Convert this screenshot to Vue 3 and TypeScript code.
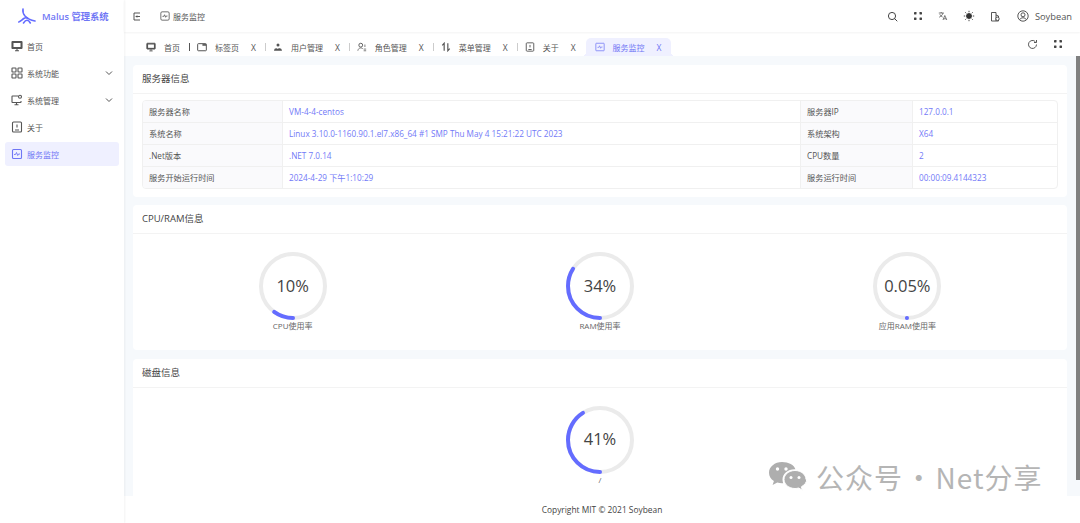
<script setup lang="ts">
const menu = [
  { label: "首页", icon: "monitor", arrow: false },
  { label: "系统功能", icon: "grid", arrow: true },
  { label: "系统管理", icon: "cog", arrow: true },
  { label: "关于", icon: "about", arrow: false },
  { label: "服务监控", icon: "pulse", arrow: false, active: true },
];

const tabs = [
  { label: "首页", icon: "monitor", close: false },
  { label: "标签页", icon: "tab", close: true },
  { label: "用户管理", icon: "users", close: true },
  { label: "角色管理", icon: "role", close: true },
  { label: "菜单管理", icon: "sort", close: true },
  { label: "关于", icon: "about", close: true },
  { label: "服务监控", icon: "pulse", close: true, active: true },
];

const rows = [
  ["服务器名称", "VM-4-4-centos", "服务器IP", "127.0.0.1"],
  ["系统名称", "Linux 3.10.0-1160.90.1.el7.x86_64 #1 SMP Thu May 4 15:21:22 UTC 2023", "系统架构", "X64"],
  [".Net版本", ".NET 7.0.14", "CPU数量", "2"],
  ["服务开始运行时间", "2024-4-29 下午1:10:29", "服务运行时间", "00:00:09.4144323"],
];

const gauges = [
  { label: "CPU使用率", value: 10, text: "10%" },
  { label: "RAM使用率", value: 34, text: "34%" },
  { label: "应用RAM使用率", value: 0.05, text: "0.05%" },
];

const radius = 32;
const circ = 2 * Math.PI * radius;
const dash = (v: number) => `${(circ * v) / 100} ${circ}`;
</script>

<template>
  <div class="layout">
    <aside class="side">
      <div class="logo">
        <svg width="18" height="16" viewBox="0 0 18 16" fill="none" stroke="#646cff" stroke-width="1.600" stroke-linecap="round">
          <path d="M5 1c-.5 3 .3 5 2 7 2 2.200 5 4 10 5" />
          <path d="M.8 14c1.500-.3 3-2 5-3.500 1.500-1 3-1 4 0" />
          <path d="M5.500 15c1-1.500 2-2.800 3.500-2.800s2.500 1.300 3.300 2.800" />
        </svg>
        <span class="logo-text">Malus 管理系统</span>
      </div>
      <nav class="menu">
        <div v-for="m in menu" :key="m.label" class="menu-item" :class="{ active: m.active }">
          <svg class="ic" width="12" height="12" viewBox="0 0 12 12" fill="none" stroke="currentColor" stroke-width="1.100">
            <template v-if="m.icon === 'monitor'">
              <rect x="1" y="1.500" width="10" height="7" rx=".6" fill="currentColor" />
              <rect x="2.500" y="3" width="7" height="4" fill="#fff" stroke="none" />
              <path d="M6 8.500v2M4 10.700h4" />
            </template>
            <template v-else-if="m.icon === 'grid'">
              <rect x="1" y="1" width="4" height="4" rx=".6" />
              <rect x="7" y="1" width="4" height="4" rx=".6" />
              <rect x="1" y="7" width="4" height="4" rx=".6" />
              <rect x="7" y="7" width="4" height="4" rx=".6" />
            </template>
            <template v-else-if="m.icon === 'cog'">
              <path d="M7 2H1.500a.5.5 0 0 0-.5.5v5.500a.5.500 0 0 0 .5.500h8a.5.500 0 0 0 .5-.500V7M5.500 8.500v2M3.500 10.700h4" />
              <circle cx="9" cy="2.800" r="1.500" />
            </template>
            <template v-else-if="m.icon === 'about'">
              <rect x="1.500" y="1" width="9" height="10" rx="1" />
              <path d="M6 3.500v3M4 9h4" />
            </template>
            <template v-else>
              <rect x="1.500" y="1.500" width="9" height="9" rx="1" />
              <path d="M3 6.500h1.500l1-2 1.200 3 .8-1.500H9" stroke-width=".9" />
            </template>
          </svg>
          <span class="menu-label">{{ m.label }}</span>
          <svg v-if="m.arrow" class="arrow" width="8" height="8" viewBox="0 0 8 8" fill="none" stroke="#555" stroke-width="1">
            <path d="M1 2.500l3 3 3-3" />
          </svg>
        </div>
      </nav>
    </aside>

    <div class="main">
      <header class="top">
        <svg class="fold" width="9" height="9" viewBox="0 0 9 9" fill="none" stroke="#444" stroke-width=".9">
          <path d="M2 1v7M2 1h6M2 8h6M4 4.500h4M4 4.500l1-1M4 4.500l1 1" />
        </svg>
        <svg class="crumb-ic" width="10" height="10" viewBox="0 0 12 12" fill="none" stroke="#555" stroke-width="1">
          <rect x="1" y="1" width="10" height="10" rx="1.500" />
          <path d="M3 6.500h1.500l1-2 1.200 3 .8-1.500H9" />
        </svg>
        <span class="crumb">服务监控</span>
        <div class="top-right">
          <svg width="11" height="11" viewBox="0 0 11 11" fill="none" stroke="#444" stroke-width="1">
            <circle cx="5" cy="5" r="3.600" />
            <path d="M7.700 7.700l2.300 2.300" stroke-linecap="round" />
          </svg>
          <svg width="10" height="10" viewBox="0 0 10 10" fill="#444">
            <rect x="1" y="1" width="2.500" height="2.500" rx=".4" />
            <rect x="6.500" y="1" width="2.500" height="2.500" rx=".4" />
            <rect x="1" y="6.500" width="2.500" height="2.500" rx=".4" />
            <rect x="6.500" y="6.500" width="2.500" height="2.500" rx=".4" />
          </svg>
          <svg width="10" height="10" viewBox="0 0 10 10" fill="none" stroke="#555" stroke-width=".8">
            <path d="M.8 2h5M3.200 1v1M5 2c-.4 1.800-1.800 3.300-3.800 4.200M1.800 3.300c.6 1.200 1.600 2.200 2.800 2.700M5 9l1.800-4.500L8.800 9M5.600 7.800h2.500" />
          </svg>
          <svg width="12" height="12" viewBox="0 0 12 12" fill="#333" stroke="#333" stroke-width=".9">
            <circle cx="6" cy="6" r="2.500" />
            <path d="M6 .8v1.400M6 9.800v1.400M.8 6h1.400M9.800 6h1.400M2.300 2.300l1 1M8.700 8.700l1 1M2.300 9.700l1-1M8.700 3.300l1-1" />
          </svg>
          <svg width="11" height="11" viewBox="0 0 11 11" fill="none" stroke="#444" stroke-width=".9">
            <path d="M1.500 10V1.500h4.500V10zM6 4l2.500 1V10H6" />
            <circle cx="7.500" cy="7.800" r="1.700" fill="#fff" />
          </svg>
          <div class="user">
            <svg width="12" height="12" viewBox="0 0 12 12" fill="none" stroke="#444" stroke-width=".9">
              <circle cx="6" cy="6" r="5.200" />
              <circle cx="6" cy="4.800" r="2" />
              <path d="M2.600 9.700c.8-1.300 2-1.900 3.400-1.900s2.600.6 3.400 1.900" />
            </svg>
            <span>Soybean</span>
          </div>
        </div>
      </header>

      <div class="tabbar">
        <div v-for="(t, i) in tabs" :key="t.label" class="tab" :class="{ active: t.active }">
          <svg class="tab-ic" width="10" height="10" viewBox="0 0 12 12" fill="none" stroke="currentColor" stroke-width="1.100">
            <template v-if="t.icon === 'monitor'">
              <rect x="1" y="1.500" width="10" height="7" rx=".6" fill="currentColor" />
              <rect x="2.500" y="3" width="7" height="4" fill="#fff" stroke="none" />
              <path d="M6 8.500v2M4 10.700h4" />
            </template>
            <template v-else-if="t.icon === 'tab'">
              <rect x=".8" y="2" width="10.400" height="8.500" rx=".8" stroke-width="1.200" />
              <path d="M6.500 2.500h4.500V4.500H6.500z" fill="currentColor" stroke="none" />
            </template>
            <template v-else-if="t.icon === 'users'">
              <circle cx="6" cy="3.500" r="1.800" fill="currentColor" stroke="none" />
              <path d="M1.200 10.500c.2-2 1.200-3 2.600-3 1 0 1.600.5 1.900 1 .3-.5 1-1 2.300-1 1.300 0 2.600 1 2.800 3z" fill="currentColor" stroke="none" />
            </template>
            <template v-else-if="t.icon === 'role'">
              <circle cx="4.500" cy="3.800" r="2.300" />
              <path d="M1 10.500c.3-2 1.600-3.400 3.500-3.400 1 0 1.800.3 2.400.9M8 8.500h3M8 10.500h3M9.500 3v3" stroke-width=".9" />
            </template>
            <template v-else-if="t.icon === 'sort'">
              <path d="M3.800 10.500V1.500L1.500 4M8.200 1.500v9l2.300-2.500" stroke-width="1.400" />
            </template>
            <template v-else-if="t.icon === 'about'">
              <rect x="1.500" y="1" width="9" height="10" rx="1" />
              <path d="M6 3.500v3M4 9h4" />
            </template>
            <template v-else>
              <rect x="1" y="1.500" width="10" height="9" rx=".6" stroke-width=".9" />
              <path d="M3 6.500h1.500l1-2 1.200 3 .8-1.500H9" stroke-width=".8" />
            </template>
          </svg>
          <span class="tab-label">{{ t.label }}</span>
          <span v-if="t.close" class="tab-x">X</span>
          <i v-if="i < tabs.length - 2" class="tab-sep" :class="{ dark: i === 0 }"></i>
        </div>
        <div class="tab-tools">
          <svg width="11" height="11" viewBox="0 0 11 11" fill="none" stroke="#444" stroke-width=".9">
            <path d="M9.500 5.500a4 4 0 1 1-1.200-2.900M9.500 1v2.500H7" />
          </svg>
          <svg width="10" height="10" viewBox="0 0 10 10" fill="#444">
            <rect x="1" y="1" width="2.500" height="2.500" rx=".4" />
            <rect x="6.500" y="1" width="2.500" height="2.500" rx=".4" />
            <rect x="1" y="6.500" width="2.500" height="2.500" rx=".4" />
            <rect x="6.500" y="6.500" width="2.500" height="2.500" rx=".4" />
          </svg>
        </div>
      </div>

      <div class="content">
        <section class="card">
          <h3 class="card-title">服务器信息</h3>
          <div class="info-body">
            <table class="info">
              <tr v-for="r in rows" :key="r[0]">
                <th class="c1">{{ r[0] }}</th>
                <td class="c2">{{ r[1] }}</td>
                <th class="c3">{{ r[2] }}</th>
                <td class="c4">{{ r[3] }}</td>
              </tr>
            </table>
          </div>
        </section>

        <section class="card">
          <h3 class="card-title">CPU/RAM信息</h3>
          <div class="gauges">
            <div v-for="g in gauges" :key="g.label" class="gauge">
              <div class="ring">
                <svg width="68" height="68" viewBox="0 0 68 68" fill="none" stroke-width="4">
                  <circle cx="34" cy="34" :r="radius" stroke="#ebebeb" />
                  <circle
                    cx="34"
                    cy="34"
                    :r="radius"
                    stroke="#646cff"
                    stroke-linecap="round"
                    :stroke-dasharray="dash(g.value)"
                    transform="rotate(90 34 34)"
                  />
                </svg>
                <span class="ring-text">{{ g.text }}</span>
              </div>
              <span class="gauge-label">{{ g.label }}</span>
            </div>
          </div>
        </section>

        <section class="card">
          <h3 class="card-title">磁盘信息</h3>
          <div class="gauges">
            <div class="gauge">
              <div class="ring">
                <svg width="68" height="68" viewBox="0 0 68 68" fill="none" stroke-width="4">
                  <circle cx="34" cy="34" :r="radius" stroke="#ebebeb" />
                  <circle
                    cx="34"
                    cy="34"
                    :r="radius"
                    stroke="#646cff"
                    stroke-linecap="round"
                    :stroke-dasharray="dash(41)"
                    transform="rotate(90 34 34)"
                  />
                </svg>
                <span class="ring-text">41%</span>
              </div>
              <span class="gauge-label">/</span>
            </div>
          </div>
        </section>
        <div class="scroll-thumb"></div>
      </div>

      <footer class="foot">Copyright MIT © 2021 Soybean</footer>
    </div>

    <div class="watermark">
      <svg width="39" height="33" viewBox="0 0 39 33" fill="#aeaeae">
        <path d="M14 1C6.800 1 1 5.800 1 11.700c0 3.400 1.900 6.400 4.900 8.400L4.600 24l4.700-2.400c1.500.4 3 .7 4.700.7l1.200-.1c-.5-1.300-.7-2.400-.7-3.700 0-5.800 5.400-10.300 12-10.300h.9C26.200 3.900 20.600 1 14 1z" />
        <path d="M38 18.500C38 13.500 33 9.500 27 9.500s-11 4-11 9 5 9 11 9c1.300 0 2.500-.2 3.700-.5l3.700 2.200-1-3.400c3-1.700 5.300-4.300 5.300-7.300z" stroke="#fff" stroke-width="1" />
        <circle cx="9.500" cy="8" r="1.700" fill="#fff" />
        <circle cx="18" cy="8" r="1.700" fill="#fff" />
        <circle cx="23" cy="16.500" r="1.500" fill="#fff" />
        <circle cx="31" cy="16.500" r="1.500" fill="#fff" />
      </svg>
      <span>公众号 · Net分享</span>
    </div>
  </div>
</template>

<style>
html,
body {
  margin: 0;
  height: 100%;
  overflow: hidden;
}
</style>

<style scoped>
.layout {
  display: flex;
  position: relative;
  width: 1080px;
  height: 523px;
  background: #fff;
  color: #555;
  font-family: "Open Sans", "Noto Sans CJK SC", sans-serif;
  font-size: 8px;
  overflow: hidden;
}

.side {
  width: 124px;
  flex-shrink: 0;
  box-shadow: 1px 0 2px rgba(0, 0, 0, 0.05);
  z-index: 2;
}

.logo {
  height: 32px;
  display: flex;
  align-items: center;
  gap: 6px;
  padding-left: 18px;
}

.logo-text {
  color: #6f76f5;
  font-size: 9.3px;
  font-weight: 600;
}

.menu {
  padding: 2px 5px;
}

.menu-item {
  display: flex;
  align-items: center;
  height: 24px;
  margin-bottom: 3px;
  padding: 0 6px;
  border-radius: 3px;
  color: #555;
}

.menu-item.active {
  background: #eff0ff;
  color: #6f76f5;
}

.ic {
  flex-shrink: 0;
}

.menu-label {
  margin-left: 4px;
}

.arrow {
  margin-left: auto;
}

.main {
  flex: 1;
  min-width: 0;
  display: flex;
  flex-direction: column;
}

.top {
  height: 32px;
  flex-shrink: 0;
  display: flex;
  align-items: center;
  padding: 0 8px;
  box-shadow: 0 1px 2px rgba(0, 0, 0, 0.05);
  z-index: 1;
}

.crumb-ic {
  margin-left: 19px;
}

.crumb {
  margin-left: 3px;
}

.top-right {
  margin-left: auto;
  display: flex;
  align-items: center;
  gap: 15px;
}

.user {
  display: flex;
  align-items: center;
  gap: 6px;
  margin-left: 1px;
  font-size: 9.3px;
}

.tabbar {
  height: 24px;
  flex-shrink: 0;
  display: flex;
  align-items: flex-end;
  padding-left: 22px;
  position: relative;
}

.tab {
  position: relative;
  display: flex;
  align-items: center;
  height: 18px;
  padding-right: 7px;
}

.tab.active {
  margin-left: 3px;
  padding: 0 9px;
  background: #eff0ff;
  color: #6f76f5;
  border-radius: 5px 5px 0 0;
}

.tab.active::before,
.tab.active::after {
  content: "";
  position: absolute;
  bottom: 0;
  width: 4px;
  height: 4px;
}

.tab.active::before {
  left: -4px;
  background: radial-gradient(circle at 0 0, transparent 4px, #eff0ff 4px);
}

.tab.active::after {
  right: -4px;
  background: radial-gradient(circle at 100% 0, transparent 4px, #eff0ff 4px);
}

.tab-label {
  margin-left: 8px;
}

.tab-x {
  margin-left: 12px;
  font-size: 8.5px;
}

.tab-sep {
  width: 1px;
  height: 8px;
  background: #ccc;
  margin-left: 9px;
}

.tab-sep.dark {
  background: #555;
}

.tab-tools {
  margin-left: auto;
  align-self: flex-start;
  display: flex;
  gap: 15px;
  padding: 7px 17px 0 0;
}

.content {
  flex: 1;
  min-height: 0;
  position: relative;
  background: #f6f9fc;
  padding: 9px 13px 0 9px;
  display: flex;
  flex-direction: column;
  gap: 8.5px;
  overflow: hidden;
}

.card {
  flex-shrink: 0;
  background: #fff;
  border-radius: 4px;
}

.card-title {
  margin: 0;
  height: 29px;
  line-height: 28px;
  padding-left: 9px;
  font-size: 9.5px;
  font-weight: 400;
  color: #444;
  border-bottom: 1px solid #f3f3f3;
  box-sizing: border-box;
}

.info-body {
  padding: 6px 9px 7.5px;
}

.info {
  width: 100%;
  border-collapse: separate;
  border-spacing: 0;
  border: 1px solid #f0f0f0;
  border-radius: 4px;
  table-layout: fixed;
  overflow: hidden;
  font-size: 8.2px;
}

.info th,
.info td {
  height: 22px;
  padding: 0 6px 1px;
  box-sizing: border-box;
  border-bottom: 1px solid #f0f0f0;
  font-weight: 400;
  text-align: left;
  white-space: nowrap;
}

.info tr:last-child th,
.info tr:last-child td {
  height: 21px;
  border-bottom: 0;
}

.info th {
  background: #fafafc;
  color: #555;
  border-right: 1px solid #f0f0f0;
}

.info td {
  color: #7279f7;
  border-right: 1px solid #f0f0f0;
}

.info td:last-child {
  border-right: 0;
}

.c1 {
  width: 140px;
}

.c2 {
  width: 518px;
}

.c3 {
  width: 112px;
}

.gauges {
  display: flex;
  height: 116px;
  padding: 18px 6px 0;
  box-sizing: border-box;
}

.gauge {
  flex: 1;
  display: flex;
  flex-direction: column;
  align-items: center;
}

.ring {
  position: relative;
  width: 68px;
  height: 68px;
}

.ring svg {
  display: block;
}

.ring-text {
  position: absolute;
  inset: 0 0 2px;
  display: flex;
  align-items: center;
  justify-content: center;
  font-size: 16.5px;
  color: #444;
}

.gauge-label {
  font-size: 8px;
  line-height: 11px;
  color: #666;
}

.scroll-thumb {
  position: absolute;
  top: 0;
  right: 0;
  width: 4px;
  height: 424px;
  background: #808080;
}

.foot {
  height: 27px;
  flex-shrink: 0;
  display: flex;
  align-items: center;
  justify-content: center;
  font-size: 8.4px;
  color: #444;
  background: #fff;
}

.watermark {
  position: absolute;
  left: 768px;
  top: 457px;
  display: flex;
  align-items: center;
  gap: 9px;
  font-size: 28px;
  letter-spacing: 1px;
  word-spacing: -5.5px;
  color: #b5b5b5;
  font-family: "Noto Sans CJK SC", sans-serif;
  z-index: 5;
}
</style>
